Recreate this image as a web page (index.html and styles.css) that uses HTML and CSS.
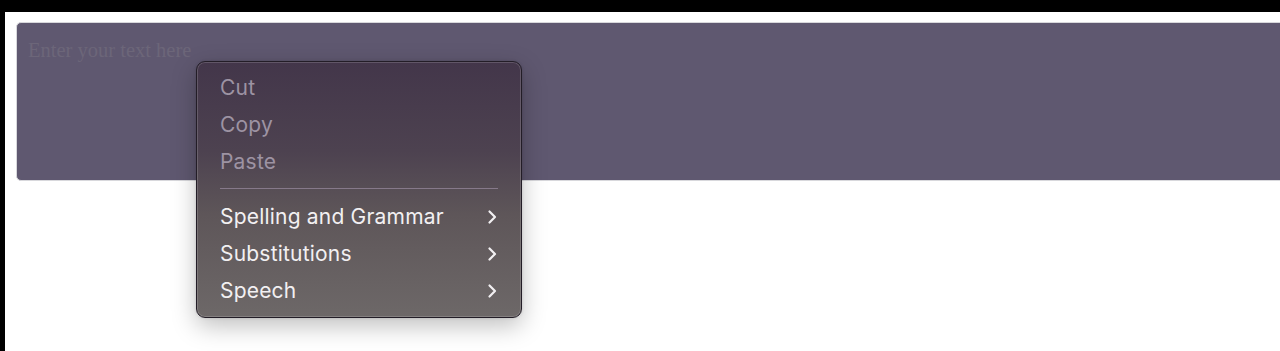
FILE: index.html
```html
<!DOCTYPE html>
<html lang="en">
<head>
<meta charset="utf-8">
<title>Context menu</title>
<link rel="stylesheet" href="styles.css">
</head>
<body>
<div class="page">
  <div class="editor">
    <div class="placeholder">Enter your text here</div>
  </div>
  <div class="menu">
    <div class="item disabled">Cut</div>
    <div class="item disabled">Copy</div>
    <div class="item disabled">Paste</div>
    <div class="sep"></div>
    <div class="item">Spelling and Grammar<svg class="chev" viewBox="0 0 10 16" width="10" height="16"><path d="M2.5 2.5 L8 8 L2.5 13.5" fill="none" stroke="currentColor" stroke-width="2.2" stroke-linecap="round" stroke-linejoin="round"/></svg></div>
    <div class="item">Substitutions<svg class="chev" viewBox="0 0 10 16" width="10" height="16"><path d="M2.5 2.5 L8 8 L2.5 13.5" fill="none" stroke="currentColor" stroke-width="2.2" stroke-linecap="round" stroke-linejoin="round"/></svg></div>
    <div class="item">Speech<svg class="chev" viewBox="0 0 10 16" width="10" height="16"><path d="M2.5 2.5 L8 8 L2.5 13.5" fill="none" stroke="currentColor" stroke-width="2.2" stroke-linecap="round" stroke-linejoin="round"/></svg></div>
  </div>
</div>
</body>
</html>
```
FILE: styles.css
```css
html, body {
  margin: 0;
  padding: 0;
  background: #000;
  height: 100%;
  overflow: hidden;
}
.page {
  position: relative;
  margin: 12px 0 0 5px;
  height: calc(100% - 12px);
  background: #fff;
  padding: 10px 0 0 11px;
  box-sizing: border-box;
}
.editor {
  height: 159px;
  margin-right: -20px;
  background: #5f5870;
  border: 1px solid #d8d8dc;
  border-radius: 5px;
  box-sizing: border-box;
  padding: 16px 11px;
}
.placeholder {
  font-family: "Liberation Serif", "Times New Roman", serif;
  font-size: 20.5px;
  color: #6c6679;
  line-height: 22px;
}
.menu {
  position: absolute;
  left: 191px;
  top: 49px;
  width: 326px;
  height: 257px;
  box-sizing: border-box;
  padding: 7px 0 8px;
  border-radius: 9px;
  border: 1px solid #231d27;
  background: linear-gradient(180deg, #43364a 0%, #4d4250 35%, #5e5659 60%, #6d6868 100%);
  box-shadow: inset 0 0 0 1px rgba(255,255,255,0.16), 0 8px 24px rgba(0,0,0,0.25), 0 0 3px rgba(0,0,0,0.15);
  font-family: Inter, "Noto Sans", sans-serif;
  font-size: 21px;
  color: #f2f0f2;
}
.item {
  display: flex;
  align-items: center;
  justify-content: space-between;
  height: 37px;
  padding: 0 24px 0 23px;
  letter-spacing: 0.2px;
}
.item.disabled {
  color: #9d93a3;
}
.sep {
  height: 1px;
  margin: 8px 23px 9px;
  background: #86798a;
}
.chev {
  display: block;
}
```
